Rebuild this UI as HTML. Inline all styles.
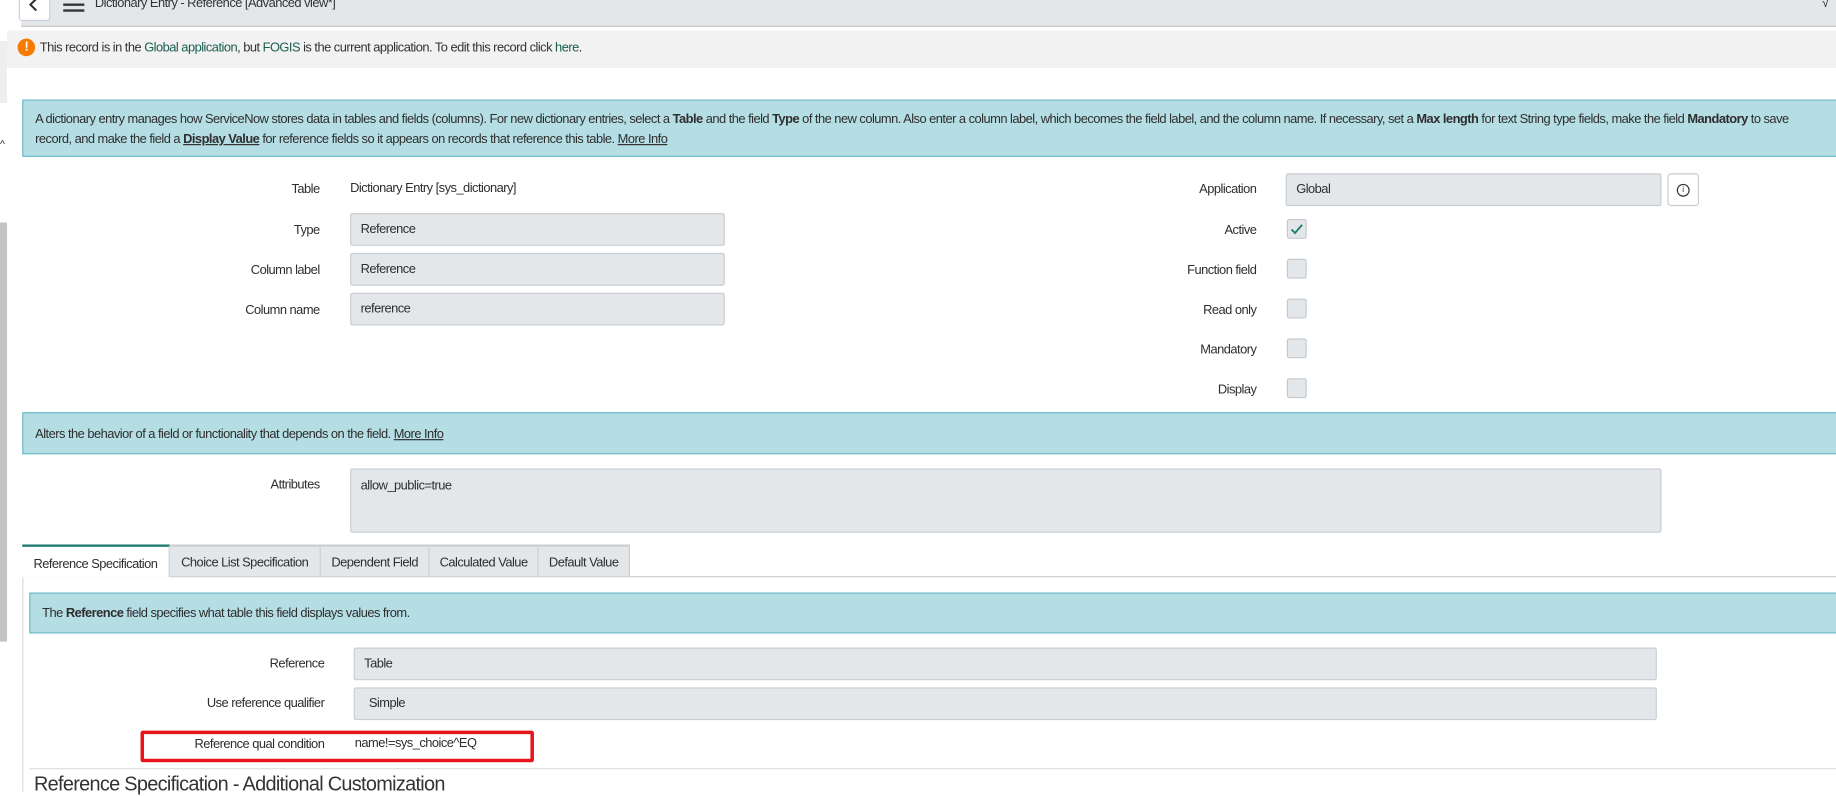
<!DOCTYPE html>
<html><head><meta charset="utf-8"><style>
html,body{margin:0;padding:0;width:1836px;height:792px;overflow:hidden;background:#fff}
#w{position:absolute;left:0;top:0;width:1568px;height:676px;transform:scale(1.17092);transform-origin:0 0;font-family:"Liberation Sans",sans-serif;font-size:11px;color:#2e2e2e;letter-spacing:-0.45px}
.a{position:absolute}
.lab{position:absolute;text-align:right;width:260px;line-height:14px}
.inp{position:absolute;background:#e4e7ea;border:1px solid #c9cdd1;border-radius:2px;box-sizing:border-box;padding-left:8px;line-height:27px}
.cb{position:absolute;width:17px;height:17px;background:#e4e7ea;border:1px solid #c5c9cd;border-radius:2px;box-sizing:border-box}
.info{position:absolute;background:#b5dde4;border:1px solid #6bbcc9;box-sizing:border-box;padding-left:10px}
b{font-weight:bold}
u{text-decoration:underline}
.tab{position:absolute;top:467px;height:25px;line-height:27px;background:#e4e7ea;border-right:1px solid #c9cdd1;box-sizing:border-box;text-align:center}
</style></head><body><div id="w">
<div class="a" style="left:0;top:0;width:18px;height:676px;background:#fff"></div>
<div class="a" style="left:0;top:35px;width:6px;height:53px;background:#eee"></div>
<div class="a" style="left:0;top:190px;width:6px;height:358px;background:#c4c4c4"></div>
<div class="a" style="left:0;top:118px;font-size:9px">^</div>
<div class="a" style="left:18px;top:0;width:1550px;height:22px;background:#e4e7ea;border-bottom:1px solid #c8c8c8"></div>
<div class="a" style="left:16px;top:-5px;width:27px;height:23px;background:#fff;border:1px solid #ccd;border-radius:3px;box-sizing:border-box"></div>
<svg class="a" style="left:24px;top:-2px" width="10" height="14"><path d="M7 1 L2 6 L7 11" stroke="#333" stroke-width="1.8" fill="none"/></svg>
<div class="a" style="left:54px;top:3px;width:18px;height:2px;background:#333"></div>
<div class="a" style="left:54px;top:8px;width:18px;height:2px;background:#333"></div>
<div class="a" style="left:81px;top:-3px;font-size:11px;color:#333">Dictionary Entry - Reference [Advanced view*]</div>
<div class="a" style="left:1556px;top:-3px;font-size:11px">√</div>
<div class="a" style="left:6px;top:26px;width:1562px;height:32px;background:#f2f2f2"></div>
<div class="a" style="left:15px;top:33px;width:15px;height:15px;border-radius:50%;background:#f57c00;color:#fff;font-weight:bold;font-size:11px;text-align:center;line-height:15px">!</div>
<div class="a" style="left:34px;top:35px;color:#333">This record is in the <span style="color:#1b5e50">Global application</span>, but <span style="color:#1b5e50">FOGIS</span> is the current application. To edit this record click <span style="color:#1b5e50">here</span>.</div>
<div class="info" style="left:19px;top:85px;width:1560px;height:49px;padding-top:8px;line-height:17px;white-space:nowrap;overflow:hidden">A dictionary entry manages how ServiceNow stores data in tables and fields (columns). For new dictionary entries, select a <b>Table</b> and the field <b>Type</b> of the new column. Also enter a column label, which becomes the field label, and the column name. If necessary, set a <b>Max length</b> for text String type fields, make the field <b>Mandatory</b> to save<br>record, and make the field a <b><u>Display Value</u></b> for reference fields so it appears on records that reference this table. <u>More Info</u></div>
<div class="lab" style="left:13px;top:155px">Table</div>
<div class="a" style="left:299px;top:155px">Dictionary Entry [sys_dictionary]</div>
<div class="lab" style="left:13px;top:190px">Type</div>
<div class="inp" style="left:299px;top:182px;width:320px;height:28px">Reference</div>
<div class="lab" style="left:13px;top:224px">Column label</div>
<div class="inp" style="left:299px;top:216px;width:320px;height:28px">Reference</div>
<div class="lab" style="left:13px;top:258px">Column name</div>
<div class="inp" style="left:299px;top:250px;width:320px;height:28px">reference</div>
<div class="lab" style="left:813px;top:155px">Application</div>
<div class="inp" style="left:1098px;top:148px;width:321px;height:28px">Global</div>
<div class="a" style="left:1424px;top:148px;width:27px;height:28px;border:1px solid #ccc;border-radius:3px;box-sizing:border-box;background:#fff"></div>
<div class="a" style="left:1432px;top:157px;width:9px;height:9px;border:1px solid #333;border-radius:50%;font-size:7px;line-height:9px;text-align:center;letter-spacing:0">i</div>
<div class="lab" style="left:813px;top:190px">Active</div>
<div class="cb" style="left:1099px;top:187px"></div>
<svg class="a" style="left:1101px;top:189px" width="13" height="13"><path d="M2 7 L5 10 L11 3" stroke="#1f7a6f" stroke-width="1.6" fill="none"/></svg>
<div class="lab" style="left:813px;top:224px">Function field</div><div class="cb" style="left:1099px;top:221px"></div>
<div class="lab" style="left:813px;top:258px">Read only</div><div class="cb" style="left:1099px;top:255px"></div>
<div class="lab" style="left:813px;top:292px">Mandatory</div><div class="cb" style="left:1099px;top:289px"></div>
<div class="lab" style="left:813px;top:326px">Display</div><div class="cb" style="left:1099px;top:323px"></div>
<div class="info" style="left:19px;top:352px;width:1560px;height:36px;line-height:36px">Alters the behavior of a field or functionality that depends on the field. <u>More Info</u></div>
<div class="lab" style="left:13px;top:407px">Attributes</div>
<div class="inp" style="left:299px;top:400px;width:1120px;height:55px;line-height:14px;padding-top:7px">allow_public=true</div>
<div class="a" style="left:19px;top:492px;width:1549px;height:1px;background:#c9cdd1"></div>
<div class="a" style="left:19px;top:492px;width:1px;height:184px;background:#ddd"></div>
<div class="a" style="left:19px;top:465px;width:519px;height:2px;background:#c9cdd1"></div>
<div class="tab" style="left:19px;width:126px;background:#fff;border-top:2px solid #1f7a6f;top:465px;height:28px;line-height:31px">Reference Specification</div>
<div class="tab" style="left:145px;width:129px;line-height:29px">Choice List Specification</div>
<div class="tab" style="left:274px;width:93px;line-height:29px">Dependent Field</div>
<div class="tab" style="left:367px;width:93px;line-height:29px">Calculated Value</div>
<div class="tab" style="left:460px;width:78px;line-height:29px">Default Value</div>
<div class="info" style="left:25px;top:506px;width:1550px;height:35px;line-height:35px">The <b>Reference</b> field specifies what table this field displays values from.</div>
<div class="lab" style="left:17px;top:560px">Reference</div>
<div class="inp" style="left:302px;top:553px;width:1113px;height:28px">Table</div>
<div class="lab" style="left:17px;top:594px">Use reference qualifier</div>
<div class="inp" style="left:302px;top:587px;width:1113px;height:28px;padding-left:12px">Simple</div>
<div class="a" style="left:120px;top:624px;width:336px;height:27px;border:3px solid #e8141b;border-radius:2px;box-sizing:border-box"></div>
<div class="lab" style="left:17px;top:629px">Reference qual condition</div>
<div class="a" style="left:303px;top:629px">name!=sys_choice^EQ</div>
<div class="a" style="left:25px;top:656px;width:1543px;height:1px;background:#ddd"></div>
<div class="a" style="left:29px;top:660px;font-size:17px;letter-spacing:-0.6px;color:#333">Reference Specification - Additional Customization</div>
</div></body></html>
